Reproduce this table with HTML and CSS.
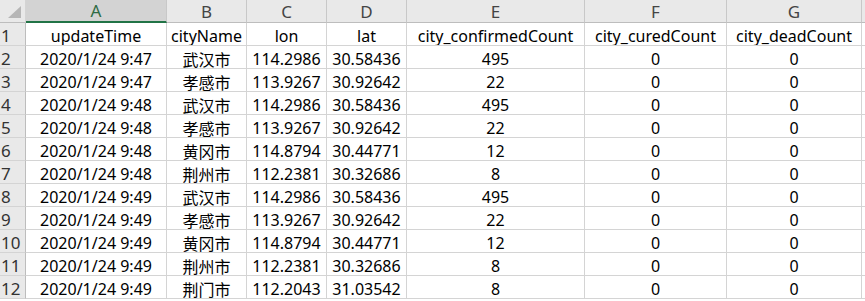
FILE: index.html
```html
<!DOCTYPE html>
<html lang="zh">
<head>
<meta charset="utf-8">
<link rel="stylesheet" href="styles.css">
</head>
<body>
<div class="sheet">
  <div class="hd corner"><span class="tri"></span></div>
  <div class="hd col sel">A</div>
  <div class="hd col">B</div>
  <div class="hd col">C</div>
  <div class="hd col">D</div>
  <div class="hd col">E</div>
  <div class="hd col">F</div>
  <div class="hd col">G</div>
  <div class="hd col last"></div>

  <div class="rh">1</div><div class="c">updateTime</div><div class="c">cityName</div><div class="c">lon</div><div class="c">lat</div><div class="c">city_confirmedCount</div><div class="c">city_curedCount</div><div class="c">city_deadCount</div><div class="c last"></div>
  <div class="rh">2</div><div class="c">2020/1/24 9:47</div><div class="c">武汉市</div><div class="c">114.2986</div><div class="c">30.58436</div><div class="c">495</div><div class="c">0</div><div class="c">0</div><div class="c last"></div>
  <div class="rh">3</div><div class="c">2020/1/24 9:47</div><div class="c">孝感市</div><div class="c">113.9267</div><div class="c">30.92642</div><div class="c">22</div><div class="c">0</div><div class="c">0</div><div class="c last"></div>
  <div class="rh">4</div><div class="c">2020/1/24 9:48</div><div class="c">武汉市</div><div class="c">114.2986</div><div class="c">30.58436</div><div class="c">495</div><div class="c">0</div><div class="c">0</div><div class="c last"></div>
  <div class="rh">5</div><div class="c">2020/1/24 9:48</div><div class="c">孝感市</div><div class="c">113.9267</div><div class="c">30.92642</div><div class="c">22</div><div class="c">0</div><div class="c">0</div><div class="c last"></div>
  <div class="rh">6</div><div class="c">2020/1/24 9:48</div><div class="c">黄冈市</div><div class="c">114.8794</div><div class="c">30.44771</div><div class="c">12</div><div class="c">0</div><div class="c">0</div><div class="c last"></div>
  <div class="rh">7</div><div class="c">2020/1/24 9:48</div><div class="c">荆州市</div><div class="c">112.2381</div><div class="c">30.32686</div><div class="c">8</div><div class="c">0</div><div class="c">0</div><div class="c last"></div>
  <div class="rh">8</div><div class="c">2020/1/24 9:49</div><div class="c">武汉市</div><div class="c">114.2986</div><div class="c">30.58436</div><div class="c">495</div><div class="c">0</div><div class="c">0</div><div class="c last"></div>
  <div class="rh">9</div><div class="c">2020/1/24 9:49</div><div class="c">孝感市</div><div class="c">113.9267</div><div class="c">30.92642</div><div class="c">22</div><div class="c">0</div><div class="c">0</div><div class="c last"></div>
  <div class="rh">10</div><div class="c">2020/1/24 9:49</div><div class="c">黄冈市</div><div class="c">114.8794</div><div class="c">30.44771</div><div class="c">12</div><div class="c">0</div><div class="c">0</div><div class="c last"></div>
  <div class="rh">11</div><div class="c">2020/1/24 9:49</div><div class="c">荆州市</div><div class="c">112.2381</div><div class="c">30.32686</div><div class="c">8</div><div class="c">0</div><div class="c">0</div><div class="c last"></div>
  <div class="rh">12</div><div class="c">2020/1/24 9:49</div><div class="c">荆门市</div><div class="c">112.2043</div><div class="c">31.03542</div><div class="c">8</div><div class="c">0</div><div class="c">0</div><div class="c last"></div>
</div>
</body>
</html>
```
FILE: styles.css
```css
html, body {
  margin: 0;
  padding: 0;
  background: #ffffff;
}
body {
  font-family: "Noto Sans", "Noto Sans CJK SC", sans-serif;
  color: #000;
  overflow: hidden;
}
.sheet {
  display: grid;
  grid-template-columns: 26px 141px 80px 80px 80px 178px 142px 135px 10px;
  grid-template-rows: 23px repeat(12, 23px);
}
.sheet > div {
  box-sizing: border-box;
  border-right: 1px solid #d4d4d4;
  border-bottom: 1px solid #d4d4d4;
  display: flex;
  align-items: center;
  white-space: nowrap;
  overflow: hidden;
}
.hd {
  background: #e9e9e9;
  font-size: 17px;
  color: #444;
  justify-content: center;
  border-bottom-color: #bdbdbd !important;
}
.sheet > .hd.col {
  border-right-color: #c8c8c8;
}
.hd.sel {
  background: #d3d3d3;
  color: #2f6b45;
  border-bottom: 2px solid #217346 !important;
}
.corner {
  position: relative;
}
.tri {
  position: absolute;
  right: 4px;
  bottom: 4px;
  width: 0;
  height: 0;
  border-left: 13px solid transparent;
  border-bottom: 12px solid #b6b6b6;
}
.rh {
  background: #e9e9e9;
  font-size: 17px;
  color: #333;
  padding-left: 1px;
  padding-top: 2px;
  border-right-color: #bdbdbd !important;
}
.c {
  font-size: 16px;
  justify-content: center;
  padding-top: 3px;
}
.sheet > .last {
  border-right: none;
}
```
